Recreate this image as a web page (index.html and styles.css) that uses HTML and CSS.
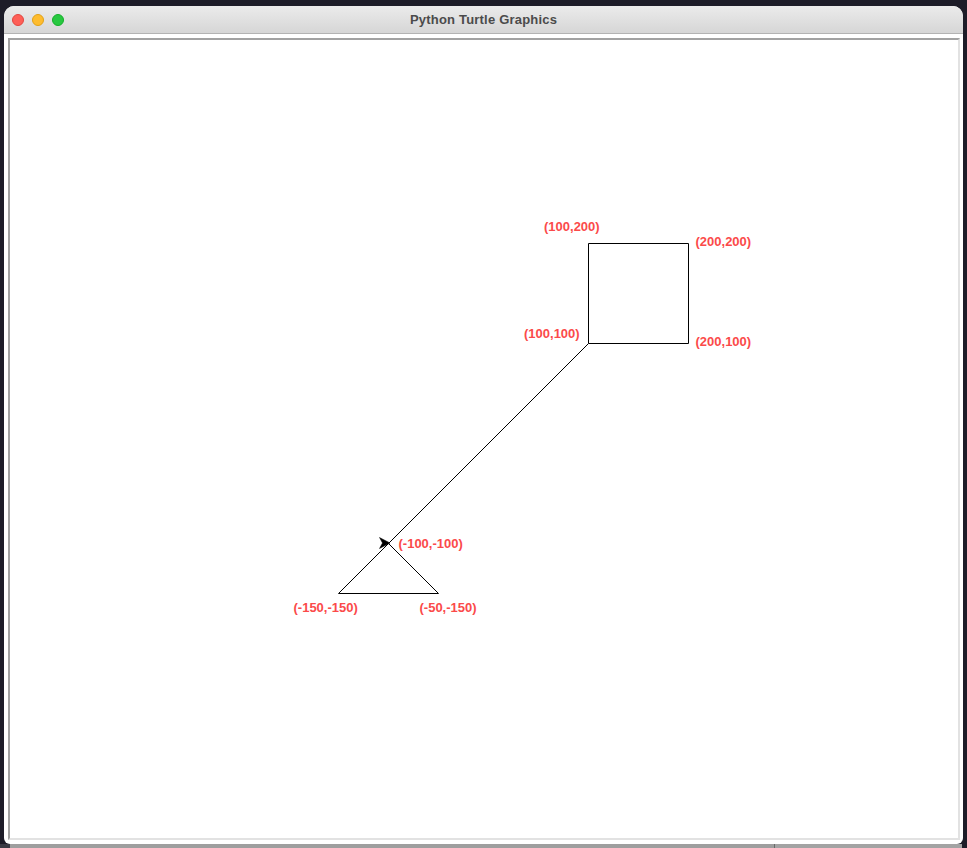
FILE: index.html
```html
<!DOCTYPE html>
<html lang="en">
<head>
<meta charset="utf-8">
<title>Python Turtle Graphics</title>
<link rel="stylesheet" href="styles.css">
</head>
<body>
<div class="window">
  <div class="titlebar">
    <div class="lights">
      <span class="light red"></span>
      <span class="light yellow"></span>
      <span class="light green"></span>
    </div>
    <div class="title">Python Turtle Graphics</div>
  </div>
  <div class="content">
    <div class="canvas">
      <svg class="drawing" viewBox="10 40 948 798" width="948" height="798" xmlns="http://www.w3.org/2000/svg">
        <path class="stroke" d="M588.5 343.5 L688.5 343.5 L688.5 243.5 L588.5 243.5 Z"/>
        <path class="stroke" d="M588.5 343.5 L388.5 543.5 L438.5 593.5 L338.5 593.5 L388.5 543.5"/>
        <path class="turtle" d="M390 543 L379.5 537.5 L382.5 543 L379.5 548.5 Z"/>
        <text class="label" x="544" y="230.5">(100,200)</text>
        <text class="label" x="695.5" y="246">(200,200)</text>
        <text class="label" x="524" y="337.5">(100,100)</text>
        <text class="label" x="695.5" y="345.5">(200,100)</text>
        <text class="label" x="398.5" y="547.5">(-100,-100)</text>
        <text class="label" x="293.5" y="611.5">(-150,-150)</text>
        <text class="label" x="419.5" y="611.5">(-50,-150)</text>
      </svg>
    </div>
  </div>
</div>
<div class="desk-strip"></div>
</body>
</html>
```
FILE: styles.css
```css
html, body {
  margin: 0;
  padding: 0;
}
body {
  width: 967px;
  height: 848px;
  overflow: hidden;
  background: #1d1c28;
  font-family: "Liberation Sans", Arial, sans-serif;
}
.window {
  margin: 6px 4px 0 4px;
  width: 959px;
  height: 838px;
  background: #ffffff;
  border-radius: 10px 10px 6px 6px;
  display: flex;
  flex-direction: column;
  overflow: hidden;
}
.titlebar {
  position: relative;
  height: 27px;
  flex: 0 0 27px;
  border-bottom: 1px solid #b3b3b3;
  background: linear-gradient(#ebebeb, #d6d6d6);
  display: flex;
  align-items: center;
}
.lights {
  display: flex;
  gap: 8px;
  padding-left: 8px;
  margin-top: 1px;
}
.light {
  width: 12px;
  height: 12px;
  border-radius: 50%;
  box-sizing: border-box;
}
.red { background: #fe5f57; border: 0.5px solid #e2463f; }
.yellow { background: #febc2e; border: 0.5px solid #e1a116; }
.green { background: #28c840; border: 0.5px solid #14ae29; }
.title {
  position: absolute;
  left: 0;
  right: 0;
  top: 0;
  line-height: 27px;
  text-align: center;
  font-size: 13px;
  font-weight: bold;
  color: #4b4b4b;
  letter-spacing: 0.2px;
}
.content {
  flex: 1;
  padding: 4px 3px 4px 4px;
  display: flex;
}
.canvas {
  width: 948px;
  height: 798px;
  border-style: solid;
  border-width: 2px;
  border-color: #a2a2a2 #e2e2e2 #e2e2e2 #a2a2a2;
  background: #ffffff;
}
.drawing {
  display: block;
}
.stroke {
  fill: none;
  stroke: #000000;
  stroke-width: 1;
}
.turtle {
  fill: #000000;
  stroke: #000000;
  stroke-width: 0.5;
}
.label {
  font-family: "Liberation Sans", Arial, sans-serif;
  font-weight: bold;
  font-size: 13px;
  fill: #fb4a4a;
}
.desk-strip {
  height: 4px;
  background: linear-gradient(90deg, #3a3a44 0 10px, #9e9e9e 10px 774px, #6a6a6a 774px 775px, #a3a3a3 775px 962px, #1d1c28 962px);
}
```
